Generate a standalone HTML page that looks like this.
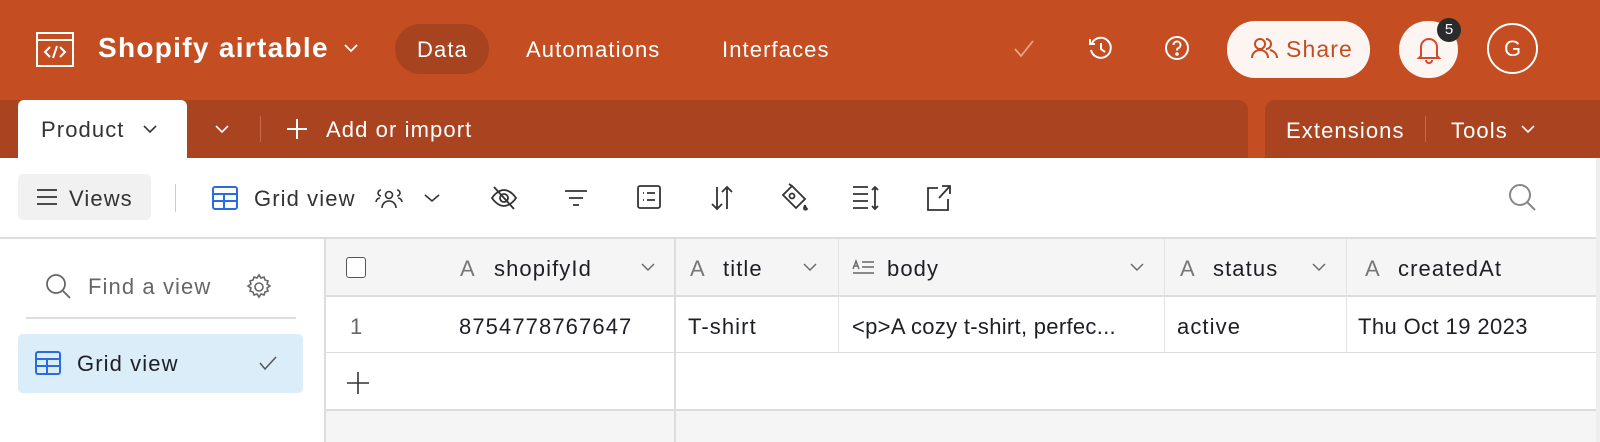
<!DOCTYPE html><html><head><style>
*{margin:0;padding:0;box-sizing:border-box}
body{width:1600px;height:442px;overflow:hidden;background:#fff;font-family:"Liberation Sans",sans-serif;position:relative;color:#1d1f25;letter-spacing:1.1px}
.a{position:absolute;white-space:nowrap}
div.a[style*="font-size:21px"]{font-size:22px!important}
svg{position:absolute;fill:none}
.w{color:#fff}
</style></head><body>
<div class="a" style="left:0;top:0;width:1600px;height:158px;background:#c44d22"></div>
<div class="a" style="left:0;top:100px;width:1248px;height:58px;background:#aa4420;border-radius:0 10px 0 0"></div>
<div class="a" style="left:1265px;top:100px;width:335px;height:58px;background:#aa4420;border-radius:10px 0 0 0"></div>
<div class="a" style="left:1596px;top:158px;width:4px;height:284px;background:#eee"></div>
<svg style="left:36px;top:32px" width="40" height="36" viewBox="0 0 40 36" stroke="#fff" stroke-width="2"><rect x="1" y="1" width="36" height="33"/><line x1="1" y1="8" x2="37" y2="8"/><path d="M14 15l-5 5 5 5M24 15l5 5-5 5M21 14l-4 12"/></svg>
<div class="a w" style="left:98px;top:32px;font-size:28px;font-weight:bold;letter-spacing:1.3px">Shopify airtable</div>
<svg style="left:343px;top:43px" width="16" height="10" stroke="#fff" stroke-width="1.8"><path d="M2 2l6 6 6-6"/></svg>
<div class="a" style="left:395px;top:24px;width:94px;height:50px;border-radius:25px;background:#a8431f"></div>
<div class="a w" style="left:417px;top:37px;font-size:21px">Data</div>
<div class="a w" style="left:526px;top:37px;font-size:21px">Automations</div>
<div class="a w" style="left:722px;top:37px;font-size:21px">Interfaces</div>
<svg style="left:1012px;top:38px" width="24" height="22" stroke="#e8a58c" stroke-width="1.8"><path d="M3 11l6 7 12-15"/></svg>
<svg style="left:1087px;top:35px" width="28" height="28" stroke="#fff" stroke-width="2"><path d="M5 8a10 10 0 1 1-1 7"/><path d="M3 4v5h5"/><path d="M14 8v6l4 3"/></svg>
<svg style="left:1164px;top:35px" width="28" height="28" stroke="#fff" stroke-width="2"><circle cx="13" cy="13" r="11"/><path d="M9.5 10a3.5 3.5 0 1 1 4.5 3.3c-1 .4-1 1-1 2.2"/><circle cx="13" cy="19" r=".8" fill="#fff"/></svg>
<div class="a" style="left:1227px;top:21px;width:143px;height:57px;border-radius:28px;background:#fcf5f2"></div>
<svg style="left:1251px;top:37px" width="28" height="24" stroke="#c44d22" stroke-width="2"><circle cx="9" cy="7" r="5"/><path d="M1 21c0-5 4-8 8-8s8 3 8 8"/><path d="M15 2a5 5 0 0 1 0 10M19 13c4 1 7 4 7 8"/></svg>
<div class="a" style="left:1286px;top:36px;font-size:23px;color:#c44d22">Share</div>
<div class="a" style="left:1399px;top:21px;width:59px;height:57px;border-radius:29px;background:#fcf5f2"></div>
<svg style="left:1416px;top:36px" width="26" height="28" stroke="#d9472a" stroke-width="2"><path d="M5 20V11a8 8 0 0 1 16 0v9l2 2H3z"/><path d="M10 24a3 3 0 0 0 6 0"/></svg>
<div class="a" style="left:1437px;top:18px;width:24px;height:24px;border-radius:12px;background:#2b2b2b;color:#fff;font-size:15px;text-align:center;line-height:24px;letter-spacing:0">5</div>
<div class="a" style="left:1487px;top:23px;width:51px;height:51px;border-radius:26px;border:2px solid #fff;color:#fff;font-size:22px;text-align:center;line-height:47px;letter-spacing:0">G</div>
<div class="a" style="left:18px;top:100px;width:169px;height:60px;background:#fff;border-radius:6px 6px 0 0"></div>
<div class="a" style="left:41px;top:117px;font-size:21px;color:#333">Product</div>
<svg style="left:142px;top:124px" width="16" height="10" stroke="#333" stroke-width="1.6"><path d="M2 2l6 6 6-6"/></svg>
<svg style="left:214px;top:124px" width="16" height="10" stroke="#fff" stroke-width="1.6"><path d="M2 2l6 6 6-6"/></svg>
<div class="a" style="left:260px;top:116px;width:1px;height:26px;background:#c96a48"></div>
<svg style="left:286px;top:118px" width="22" height="22" stroke="#fff" stroke-width="2"><path d="M11 1v20M1 11h20"/></svg>
<div class="a w" style="left:326px;top:117px;font-size:21px">Add or import</div>
<div class="a w" style="left:1286px;top:118px;font-size:21px">Extensions</div>
<div class="a" style="left:1425px;top:116px;width:1px;height:26px;background:#c96a48"></div>
<div class="a w" style="left:1451px;top:118px;font-size:21px">Tools</div>
<svg style="left:1520px;top:124px" width="16" height="10" stroke="#fff" stroke-width="1.6"><path d="M2 2l6 6 6-6"/></svg>
<div class="a" style="left:18px;top:174px;width:133px;height:46px;background:#f1f1f1;border-radius:5px"></div>
<svg style="left:36px;top:188px" width="22" height="18" stroke="#333" stroke-width="1.8"><path d="M1 2h20M1 9h20M1 16h20"/></svg>
<div class="a" style="left:69px;top:186px;font-size:21px;color:#333">Views</div>
<div class="a" style="left:175px;top:184px;width:1px;height:28px;background:#ccc"></div>
<svg style="left:212px;top:186px" width="26" height="24" stroke="#2b6be0" stroke-width="2"><rect x="1" y="1" width="24" height="22" rx="2"/><path d="M1 8h24M1 15h24M12 8v15"/></svg>
<div class="a" style="left:254px;top:186px;font-size:21px;color:#333">Grid view</div>
<svg style="left:374px;top:187px" width="30" height="22" stroke="#333" stroke-width="1.6"><circle cx="15" cy="8" r="3.5"/><path d="M8 21c0-4 3-7 7-7s7 3 7 7"/><path d="M7 3a3 3 0 0 0 0 6M2 15c0-2 2-4 4-4M23 3a3 3 0 0 1 0 6M28 15c0-2-2-4-4-4"/></svg>
<svg style="left:423px;top:193px" width="18" height="10" stroke="#333" stroke-width="1.6"><path d="M2 2l7 6 7-6"/></svg>
<svg style="left:490px;top:185px" width="28" height="26" stroke="#333" stroke-width="1.8"><path d="M2 13s5-8 12-8 12 8 12 8-5 8-12 8S2 13 2 13z"/><circle cx="14" cy="13" r="4"/><path d="M4 2l20 22"/></svg>
<svg style="left:564px;top:189px" width="24" height="18" stroke="#333" stroke-width="1.8"><path d="M1 2h22M5 9h14M9 16h6"/></svg>
<svg style="left:637px;top:185px" width="24" height="24" stroke="#333" stroke-width="1.8"><rect x="1" y="1" width="22" height="22" rx="2"/><path d="M6 8h1M10 8h8M6 15h1M10 15h8"/></svg>
<svg style="left:710px;top:185px" width="24" height="26" stroke="#333" stroke-width="1.8"><path d="M7 2v22M2 19l5 5 5-5M17 24V2M12 7l5-5 5 5"/></svg>
<svg style="left:780px;top:183px" width="30" height="30" stroke="#333" stroke-width="1.8"><path d="M12 3l13 13-9 9L3 12z"/><circle cx="12" cy="13" r="2.5"/><path d="M25 22c0 2 1 3 2 4-1 1-3 1-3-1z"/><path d="M9 1l3 2"/></svg>
<svg style="left:852px;top:185px" width="30" height="26" stroke="#333" stroke-width="1.8"><path d="M1 2h15M1 9h15M1 16h15M1 23h15M23 2v22M20 5l3-3 3 3M20 21l3 3 3-3"/></svg>
<svg style="left:926px;top:183px" width="26" height="28" stroke="#333" stroke-width="1.8"><path d="M12 5H2v22h20V16"/><path d="M13 15L24 3M16 3h8v8"/></svg>
<svg style="left:1508px;top:183px" width="30" height="30" stroke="#888" stroke-width="2"><circle cx="12" cy="12" r="10"/><path d="M19 19l8 8"/></svg>
<div class="a" style="left:0;top:237px;width:1596px;height:2px;background:#ddd"></div>
<svg style="left:45px;top:273px" width="28" height="28" stroke="#666" stroke-width="1.8"><circle cx="11" cy="11" r="9"/><path d="M18 18l7 7"/></svg>
<div class="a" style="left:88px;top:274px;font-size:21px;color:#666">Find a view</div>
<svg style="left:245px;top:273px" width="28" height="28" stroke="#666" stroke-width="1.6"><circle cx="14" cy="14" r="4"/><path d="M14 2l2 3 3-1 1 3 3 1-1 3 3 2-3 2 1 3-3 1-1 3-3-1-2 3-2-3-3 1-1-3-3-1 1-3-3-2 3-2-1-3 3-1 1-3 3 1z"/></svg>
<div class="a" style="left:26px;top:317px;width:270px;height:2px;background:#ddd"></div>
<div class="a" style="left:18px;top:334px;width:285px;height:59px;background:#dcedfa;border-radius:5px"></div>
<svg style="left:35px;top:351px" width="26" height="24" stroke="#2b6be0" stroke-width="2"><rect x="1" y="1" width="24" height="22" rx="2"/><path d="M1 8h24M1 15h24M12 8v15"/></svg>
<div class="a" style="left:77px;top:351px;font-size:21px">Grid view</div>
<svg style="left:258px;top:355px" width="20" height="16" stroke="#555" stroke-width="1.5"><path d="M2 8l5 6 11-12"/></svg>
<div class="a" style="left:325px;top:239px;width:1271px;height:203px;background:#f5f5f5"></div>
<div class="a" style="left:325px;top:296px;width:1271px;height:57px;background:#fff"></div>
<div class="a" style="left:325px;top:353px;width:1271px;height:56px;background:#fff"></div>
<div class="a" style="left:324px;top:239px;width:2px;height:203px;background:#ddd"></div>
<div class="a" style="left:325px;top:295px;width:1271px;height:2px;background:#ddd"></div>
<div class="a" style="left:325px;top:352px;width:1271px;height:1px;background:#ddd"></div>
<div class="a" style="left:325px;top:409px;width:1271px;height:2px;background:#ddd"></div>
<div class="a" style="left:674px;top:239px;width:2px;height:203px;background:#ddd"></div>
<div class="a" style="left:838px;top:239px;width:1px;height:114px;background:#e3e3e3"></div>
<div class="a" style="left:1164px;top:239px;width:1px;height:114px;background:#e3e3e3"></div>
<div class="a" style="left:1346px;top:239px;width:1px;height:114px;background:#e3e3e3"></div>
<div class="a" style="left:346px;top:257px;width:20px;height:21px;border:1.5px solid #555;border-radius:3px;background:#fff"></div>
<div class="a" style="left:460px;top:256px;font-size:21px;color:#777">A</div>
<div class="a" style="left:494px;top:256px;font-size:21px">shopifyId</div>
<svg style="left:640px;top:262px" width="16" height="10" stroke="#666" stroke-width="1.4"><path d="M2 2l6 6 6-6"/></svg>
<div class="a" style="left:690px;top:256px;font-size:21px;color:#777">A</div>
<div class="a" style="left:723px;top:256px;font-size:21px">title</div>
<svg style="left:802px;top:262px" width="16" height="10" stroke="#666" stroke-width="1.4"><path d="M2 2l6 6 6-6"/></svg>
<svg style="left:852px;top:259px" width="24" height="16" stroke="#666" stroke-width="1.4"><path d="M1 10l3-8 3 8M2 7h4M10 3h12M10 8h12M1 14h21"/></svg>
<div class="a" style="left:887px;top:256px;font-size:21px">body</div>
<svg style="left:1129px;top:262px" width="16" height="10" stroke="#666" stroke-width="1.4"><path d="M2 2l6 6 6-6"/></svg>
<div class="a" style="left:1180px;top:256px;font-size:21px;color:#777">A</div>
<div class="a" style="left:1213px;top:256px;font-size:21px">status</div>
<svg style="left:1311px;top:262px" width="16" height="10" stroke="#666" stroke-width="1.4"><path d="M2 2l6 6 6-6"/></svg>
<div class="a" style="left:1365px;top:256px;font-size:21px;color:#777">A</div>
<div class="a" style="left:1398px;top:256px;font-size:21px">createdAt</div>
<div class="a" style="left:350px;top:314px;font-size:21px;color:#666">1</div>
<div class="a" style="left:459px;top:314px;font-size:21px">8754778767647</div>
<div class="a" style="left:688px;top:314px;font-size:21px">T-shirt</div>
<div class="a" style="left:852px;top:314px;font-size:21px;letter-spacing:0.3px">&lt;p&gt;A cozy t-shirt, perfec...</div>
<div class="a" style="left:1177px;top:314px;font-size:21px">active</div>
<div class="a" style="left:1358px;top:314px;font-size:21px;letter-spacing:0.4px">Thu Oct 19 2023</div>
<svg style="left:346px;top:371px" width="24" height="24" stroke="#333" stroke-width="1.6"><path d="M12 1v22M1 12h22"/></svg>
</body></html>
